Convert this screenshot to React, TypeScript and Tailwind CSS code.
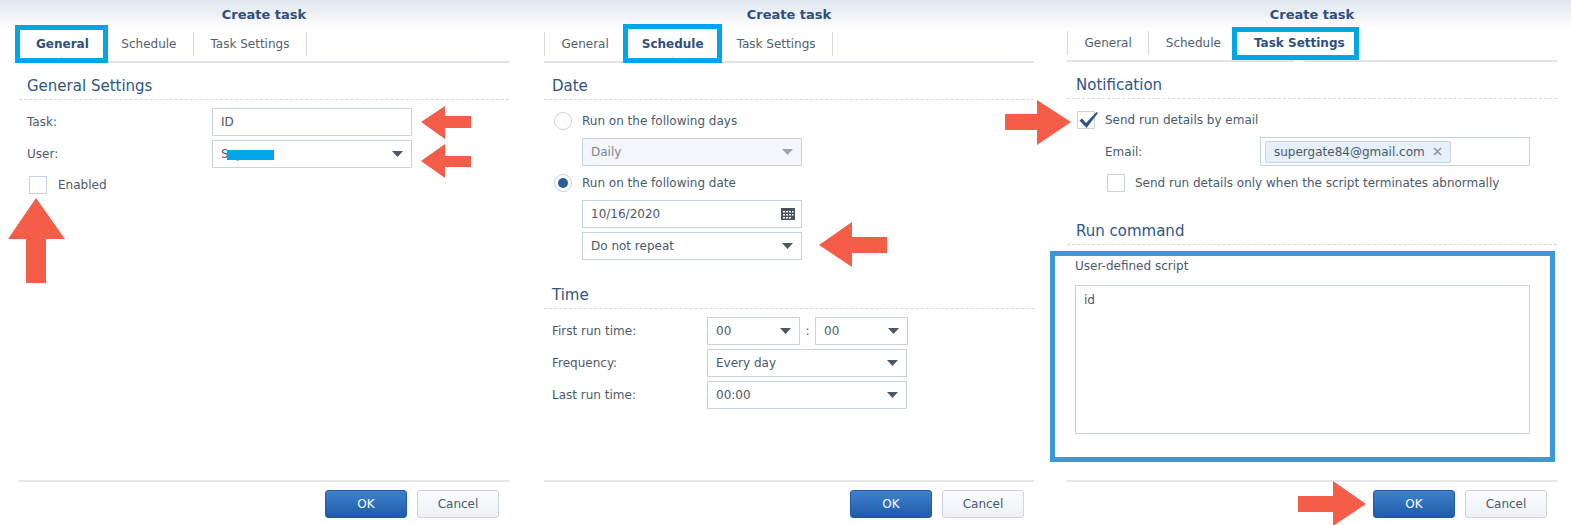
import type { ReactNode } from 'react';

const tabNames = ['General', 'Schedule', 'Task Settings'];

function Tabs({ active, first }: { active: number; first?: boolean }) {
  return (
    <div className="flex h-[33px] items-center border-b-2 border-[#dfe3e8] pb-[4px]">
      {tabNames.map((name, i) => {
        const isActive = i === active;
        const sepRight = !isActive && i + 1 !== active;
        const sepLeft = i === 0 && !isActive;
        return (
          <div
            key={name}
            className={`relative flex h-[24px] items-center ${first && i === 0 ? 'pl-[17px] pr-[16px]' : 'px-[16.5px]'} ${sepRight ? 'border-r border-[#d5dce5]' : ''} ${sepLeft ? 'border-l border-[#d5dce5]' : ''} ${isActive ? 'font-bold text-[#2f4f7f]' : 'text-[#526070]'}`}
          >
            {name}
            {isActive && (
              <span className="absolute bottom-[-11px] left-1/2 h-[9px] w-[9px] -translate-x-1/2 rotate-45 border-l border-t border-[#dfe3e8] bg-white" />
            )}
          </div>
        );
      })}
    </div>
  );
}

function Heading({ children, pad = 'pl-[8px]' }: { children: ReactNode; pad?: string }) {
  return (
    <div className={`flex h-[37px] items-end border-b border-dashed border-[#d5dce5] pb-[1px] text-[15px] leading-[24px] text-[#2f5587] ${pad}`}>
      {children}
    </div>
  );
}

function Caret({ disabled }: { disabled?: boolean }) {
  return (
    <svg width="11" height="6" viewBox="0 0 11 6" className="shrink-0">
      <polygon points="0,0 11,0 5.5,6" fill={disabled ? '#9aa4af' : '#4d5864'} />
    </svg>
  );
}

function Field({ className, children, select, disabled }: { className: string; children: ReactNode; select?: boolean; disabled?: boolean }) {
  return (
    <div className={`relative flex h-[28px] items-center justify-between border border-[#c8d3e0] pl-[8px] pr-[8px] ${disabled ? 'bg-[#f3f6fa] text-[#7d8894]' : 'bg-white text-[#4c5a68]'} ${className}`}>
      <span>{children}</span>
      {select && <Caret disabled={disabled} />}
    </div>
  );
}

function Checkbox({ checked, className = '' }: { checked?: boolean; className?: string }) {
  return (
    <div className={`relative h-[18px] w-[18px] shrink-0 border border-[#c8d3e0] bg-white ${className}`}>
      {checked && (
        <svg width="21" height="18" viewBox="0 0 21 18" className="absolute left-[0px] top-[-1px]">
          <path d="M1.5 9.5 L4 7.5 L8 12 L18.5 1 L20 2 L8.5 17 Z" fill="#2b5590" />
        </svg>
      )}
    </div>
  );
}

function Radio({ checked }: { checked?: boolean }) {
  return (
    <div className="flex h-[18px] w-[18px] shrink-0 items-center justify-center rounded-full border border-[#c8d3e0] bg-white">
      {checked && <div className="h-[10px] w-[10px] rounded-full bg-[#2b5c9e]" />}
    </div>
  );
}

function Footer() {
  return (
    <div className="mt-auto flex h-[45px] justify-end gap-[10px] border-t-2 border-[#e3e5e8] pr-[10px] pt-[8px]">
      <button type="button" className="h-[28px] w-[82px] rounded-[3px] border border-[#1f5ca6] bg-gradient-to-b from-[#3f81cf] to-[#1f5ca8] text-white">
        OK
      </button>
      <button type="button" className="h-[28px] w-[82px] rounded-[3px] border border-[#cbd5e1] bg-gradient-to-b from-[#fbfcfd] to-[#edf1f6] text-[#4c5a68]">
        Cancel
      </button>
    </div>
  );
}

function Title({ tall = true }: { tall?: boolean }) {
  return (
    <div className={`flex items-center justify-center text-[13px] font-bold text-[#2f4f7f] ${tall ? 'h-[30px]' : 'h-[29px]'}`}>
      Create task
    </div>
  );
}

function GeneralPanel() {
  return (
    <section className="flex h-[525px] w-[490px] shrink-0 flex-col">
      <Title />
      <Tabs active={0} first />
      <Heading>General Settings</Heading>
      <div className="mt-[8px] flex items-center pl-[8px]">
        <span className="w-[185px] text-[#4c5a68]">Task:</span>
        <Field className="w-[200px]">ID</Field>
      </div>
      <div className="mt-[4px] flex items-center pl-[8px]">
        <span className="w-[185px] text-[#4c5a68]">User:</span>
        <Field className="w-[200px]" select>
          Sup
          <span className="absolute left-[14px] top-[9px] h-[10px] w-[47px] bg-[#00a6e8]" />
        </Field>
      </div>
      <div className="mt-[8px] flex items-center gap-[11px] pl-[10px] text-[#4c5a68]">
        <Checkbox />
        Enabled
      </div>
      <Footer />
    </section>
  );
}

function SchedulePanel() {
  return (
    <section className="ml-[35px] flex h-[525px] w-[490px] shrink-0 flex-col">
      <Title />
      <Tabs active={1} />
      <Heading>Date</Heading>
      <div className="mt-[12px] flex items-center gap-[10px] pl-[10px] text-[#4c5a68]">
        <Radio />
        Run on the following days
      </div>
      <Field className="ml-[38px] mt-[8px] w-[220px]" select disabled>Daily</Field>
      <div className="mt-[8px] flex items-center gap-[10px] pl-[10px] text-[#4c5a68]">
        <Radio checked />
        Run on the following date
      </div>
      <div className="relative ml-[38px] mt-[8px] w-[220px]">
        <Field className="w-full">10/16/2020</Field>
        <svg width="14" height="12" viewBox="0 0 14 12" className="absolute right-[7px] top-[8px]">
          <rect width="14" height="12" fill="#47525e" />
          <path d="M2 3h2v1.5H2zM5 3h2v1.5H5zM8 3h2v1.5H8zM11 3h1.5v1.5H11zM2 6h2v1.5H2zM5 6h2v1.5H5zM8 6h2v1.5H8zM11 6h1.5v1.5H11zM2 9h2v1.5H2zM5 9h2v1.5H5zM8 9h2v1.5H8z" fill="#fff" />
        </svg>
      </div>
      <Field className="ml-[38px] mt-[4px] w-[220px]" select>Do not repeat</Field>
      <div className="mt-[12px]">
        <Heading>Time</Heading>
      </div>
      <div className="mt-[8px] flex items-center pl-[8px]">
        <span className="w-[155px] text-[#4c5a68]">First run time:</span>
        <Field className="w-[93px]" select>00</Field>
        <span className="w-[15px] text-center text-[#4c5a68]">:</span>
        <Field className="w-[93px]" select>00</Field>
      </div>
      <div className="mt-[4px] flex items-center pl-[8px]">
        <span className="w-[155px] text-[#4c5a68]">Frequency:</span>
        <Field className="w-[200px]" select>Every day</Field>
      </div>
      <div className="mt-[4px] flex items-center pl-[8px]">
        <span className="w-[155px] text-[#4c5a68]">Last run time:</span>
        <Field className="w-[200px]" select>00:00</Field>
      </div>
      <Footer />
    </section>
  );
}

function TaskSettingsPanel() {
  return (
    <section className="ml-[33px] flex h-[525px] w-[490px] shrink-0 flex-col">
      <Title tall={false} />
      <Tabs active={2} />
      <Heading pad="pl-[9px]">Notification</Heading>
      <div className="mt-[12px] flex items-center gap-[10px] pl-[10px] text-[#4c5a68]">
        <Checkbox checked />
        Send run details by email
      </div>
      <div className="mt-[8px] flex items-center pl-[38px]">
        <span className="w-[155px] text-[#4c5a68]">Email:</span>
        <div className="flex h-[29px] w-[270px] items-center border border-[#c8d3e0] bg-white pl-[4px]">
          <div className="flex h-[22px] w-[186px] items-center justify-between rounded-[2px] border border-[#c6d6e8] bg-[#e6f0fa] pl-[8px] pr-[8px] text-[#4c5a68]">
            supergate84@gmail.com
            <svg width="9" height="9" viewBox="0 0 9 9">
              <path d="M1 1 L8 8 M8 1 L1 8" stroke="#8d98a3" strokeWidth="1.6" />
            </svg>
          </div>
        </div>
      </div>
      <div className="mt-[8px] flex items-center gap-[10px] pl-[40px] text-[#4c5a68]">
        <Checkbox />
        Send run details only when the script terminates abnormally
      </div>
      <div className="mt-[16px]">
        <Heading pad="pl-[9px]">Run command</Heading>
      </div>
      <div className="mt-[13px] pl-[8px] leading-[16px] text-[#4c5a68]">User-defined script</div>
      <div className="ml-[8px] mt-[11px] h-[149px] w-[455px] border border-[#c8d3e0] bg-white px-[8px] py-[5px] text-[#4c5a68]">
        id
      </div>
      <Footer />
    </section>
  );
}

export default function App() {
  return (
    <div className="relative h-[525px] w-[1571px] overflow-hidden bg-white font-['DejaVu_Sans','Liberation_Sans',sans-serif] text-[12px]">
      <div className="absolute left-0 right-0 top-0 h-[30px] bg-gradient-to-b from-[#dfe6ef] to-white" />
      <div className="relative flex pl-[19px]">
        <GeneralPanel />
        <SchedulePanel />
        <TaskSettingsPanel />
      </div>

      {/* annotations drawn on top of the screenshots */}
      <div className="absolute left-[15px] top-[25px] h-[38px] w-[93px] border-[5px] border-[#00a6e8]" />
      <div className="absolute left-[623px] top-[24px] h-[39px] w-[99px] border-[5px] border-[#00a6e8]" />
      <div className="absolute left-[1232px] top-[27px] h-[33px] w-[127px] border-[5px] border-[#00a6e8]" />
      <div className="absolute left-[1050px] top-[251px] h-[211px] w-[505px] border-[5px] border-[#3a9ad9]" />
      <svg className="absolute left-0 top-0 h-[525px] w-[1571px]" viewBox="0 0 1571 525">
        <g fill="#f45d48">
          <polygon points="421,122 445,106 445,116 471,116 471,128 445,128 445,139" />
          <polygon points="421,161 445,144 445,156 471,156 471,167 445,167 445,178" />
          <polygon points="36,198 65,239 46,239 46,283 26,283 26,239 8,239" />
          <polygon points="819,245 852,222 852,237 887,237 887,253 852,253 852,267" />
          <polygon points="1071,122 1037,100 1037,114 1005,114 1005,130 1037,130 1037,145" />
          <polygon points="1366,504 1333,481 1333,496 1298,496 1298,512 1333,512 1333,526" />
        </g>
      </svg>
    </div>
  );
}
